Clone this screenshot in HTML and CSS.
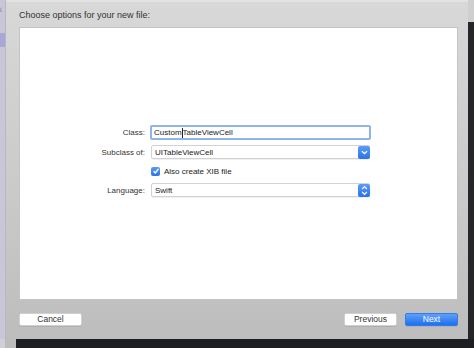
FILE: index.html
```html
<!DOCTYPE html>
<html>
<head>
<meta charset="utf-8">
<link rel="stylesheet" href="styles.css">
</head>
<body>
<div class="screen">
  <div class="main">
    <div class="side-left">
      <div class="back">‹</div>
      <div class="sel"></div>
    </div>
    <div class="sheet">
      <div class="title">Choose options for your new file:</div>
      <div class="panel">
        <div class="form">
          <label class="lbl">Class:</label>
          <div class="field focus"><span>Custom</span><span class="caret"></span><span>TableViewCell</span></div>
          <label class="lbl">Subclass of:</label>
          <div class="popup"><span class="val">UITableViewCell</span><span class="pbtn"><svg width="7" height="5" viewBox="0 0 7 5"><path d="M1 1.2 L3.5 3.7 L6 1.2" fill="none" stroke="#fff" stroke-width="1.3"/></svg></span></div>
          <span></span>
          <div class="check"><span class="box"><svg width="8" height="8" viewBox="0 0 8 8"><path d="M1.6 4.2 L3.3 6 L6.5 1.8" fill="none" stroke="#fff" stroke-width="1.4"/></svg></span><span>Also create XIB file</span></div>
          <label class="lbl">Language:</label>
          <div class="popup"><span class="val">Swift</span><span class="pbtn"><svg width="7" height="11" viewBox="0 0 7 11"><path d="M1.2 4 L3.5 1.7 L5.8 4 M1.2 7 L3.5 9.3 L5.8 7" fill="none" stroke="#fff" stroke-width="1.2"/></svg></span></div>
        </div>
      </div>
      <div class="buttons">
        <button class="btn cancel">Cancel</button>
        <div class="right">
          <button class="btn prev">Previous</button>
          <button class="btn next">Next</button>
        </div>
      </div>
    </div>
    <div class="side-right"></div>
  </div>
  <div class="bottom">
    <div class="bottom-left"></div>
    <div class="bottom-dark"></div>
  </div>
</div>
</body>
</html>
```
FILE: styles.css
```css
html, body {
  margin: 0;
  padding: 0;
  width: 474px;
  height: 348px;
  overflow: hidden;
  font-family: "Liberation Sans", Arial, sans-serif;
  color: #2e2e2e;
}
.screen {
  width: 474px;
  height: 348px;
  display: flex;
  flex-direction: column;
}
.main {
  display: flex;
  height: 339px;
}
.side-left {
  width: 5px;
  background: #c8c6d8;
  border-right: 1px solid #b8b8bf;
  position: relative;
}
.side-left .back {
  font-size: 10px;
  color: #8c8c96;
  line-height: 10px;
  margin-top: 5px;
  margin-left: -1px;
}
.side-left .sel {
  margin-top: 18px;
  height: 14px;
  background: #aaa6d6;
}
.sheet {
  flex: 1;
  display: flex;
  flex-direction: column;
  background: linear-gradient(#d8d8d8, #c9c9c9 60%, #bdbdbd);
  border-top: 2px solid #e2e2e2;
}
.title {
  height: 25px;
  font-size: 9px;
  line-height: 9px;
  padding-left: 13px;
  padding-top: 9px;
  box-sizing: border-box;
  color: #333;
}
.panel {
  margin-left: 13px;
  margin-right: 10px;
  height: 273px;
  background: #fff;
  border: 1px solid #c4c4c4;
  box-sizing: border-box;
  padding-top: 97px;
}
.form {
  display: grid;
  grid-template-columns: 125px 221px;
  column-gap: 5px;
  row-gap: 5px;
  align-items: center;
  font-size: 8px;
}
.lbl {
  text-align: right;
  color: #333;
}
.field {
  height: 15px;
  box-sizing: border-box;
  border: 2px solid #8fb3ea;
  border-radius: 2px;
  display: flex;
  align-items: center;
  padding-left: 2px;
  color: #222;
}
.caret {
  width: 1px;
  height: 10px;
  background: #222;
}
.popup {
  height: 14px;
  box-sizing: border-box;
  border: 1px solid #d2d2d2;
  border-radius: 2px;
  display: flex;
  align-items: center;
  justify-content: space-between;
  margin-left: 1px;
  margin-right: 1px;
  box-shadow: 0 0.5px 0.5px rgba(0,0,0,0.12);
}
.popup .val {
  padding-left: 3px;
  color: #222;
}
.pbtn {
  width: 12px;
  height: 13px;
  margin-right: -1px;
  background: linear-gradient(#5a9cf6, #2a74ea);
  border-radius: 2px;
  display: flex;
  align-items: center;
  justify-content: center;
}
.check {
  display: flex;
  align-items: center;
  gap: 4px;
  height: 14px;
  color: #222;
  margin-left: 1px;
}
.box {
  width: 9px;
  height: 9px;
  border-radius: 2px;
  background: linear-gradient(#5a9cf6, #2a74ea);
  display: flex;
  align-items: center;
  justify-content: center;
}
.buttons {
  display: flex;
  justify-content: space-between;
  align-items: flex-start;
  margin-left: 13px;
  margin-right: 10px;
  padding-top: 13px;
}
.right {
  display: flex;
  gap: 8px;
}
.btn {
  font-family: "Liberation Sans", Arial, sans-serif;
  font-size: 8.5px;
  height: 13px;
  padding: 0;
  border: 1px solid #d0d0d0;
  border-radius: 2px;
  background: #fff;
  color: #333;
  line-height: 11px;
  box-shadow: 0 0.5px 0.5px rgba(0,0,0,0.15);
}
.cancel { width: 63px; }
.prev { width: 53px; }
.next {
  width: 53px;
  border-color: #2f7cf0;
  background: linear-gradient(#5fa0f7, #1e6ff0);
  color: #fff;
}
.side-right {
  width: 6px;
  background: linear-gradient(#cfcfcf 0, #cfcfcf 22px, #26262a 22px);
}
.bottom {
  display: flex;
  height: 9px;
}
.bottom-left {
  width: 16px;
  background: linear-gradient(90deg, #cfcfd6 0 5px, #bcbcbc 5px);
}
.bottom-dark {
  flex: 1;
  background: #1d1e22;
}
```
